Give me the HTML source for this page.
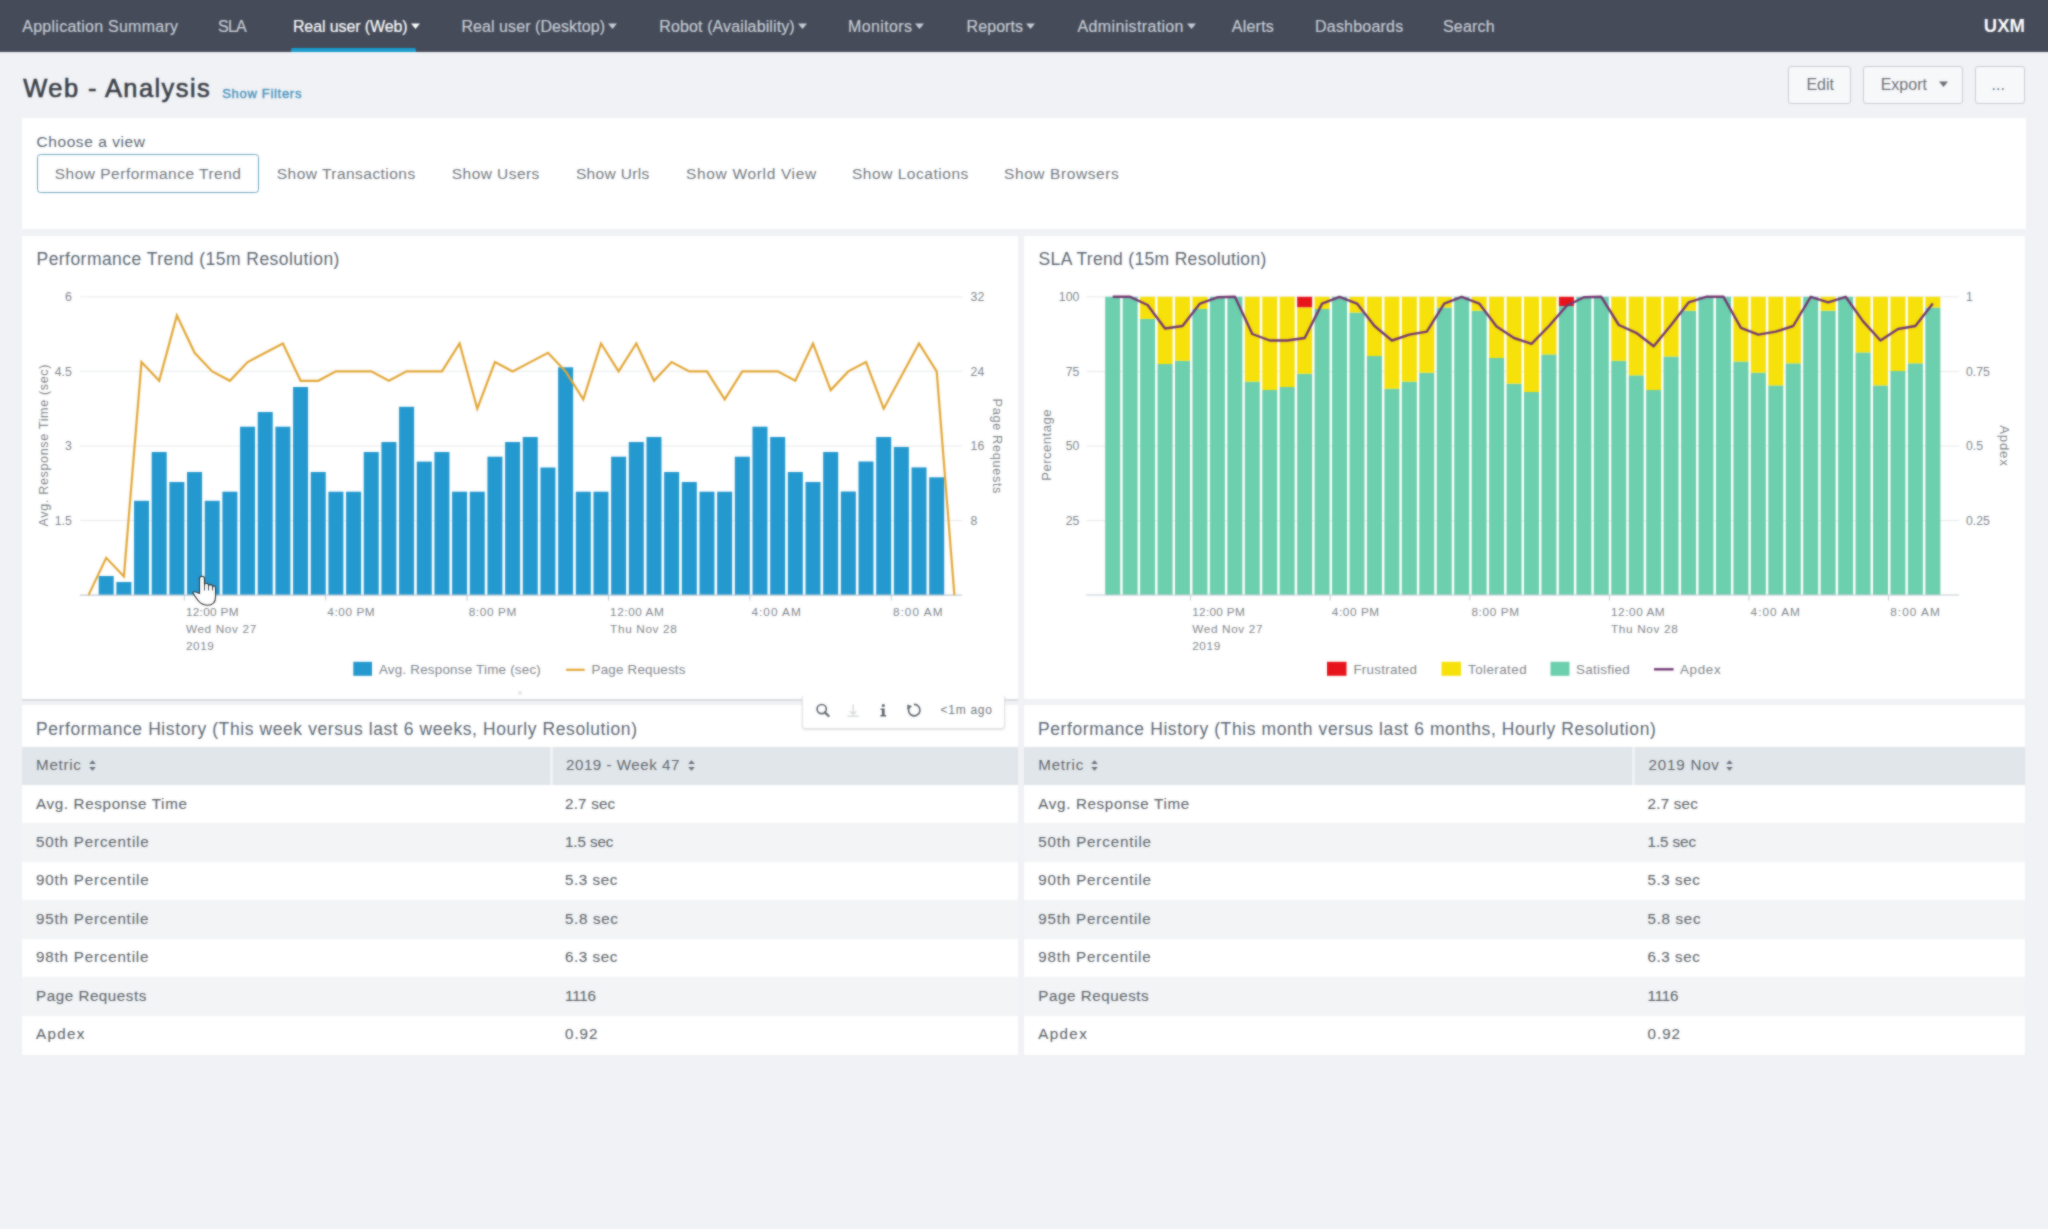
<!DOCTYPE html>
<html><head><meta charset="utf-8"><title>Web - Analysis</title>
<style>
html,body{margin:0;padding:0;width:2048px;height:1229px;overflow:hidden;background:#f1f2f5;font-family:"Liberation Sans", sans-serif;}
.t{position:absolute;white-space:nowrap;line-height:1;font-family:"Liberation Sans", sans-serif;}
.wrap{position:absolute;left:-12px;top:-12px;width:2072px;height:1253px;background:#f1f2f5;overflow:hidden;}
.bl{filter:blur(0.9px);opacity:0.6;}
.inner{position:absolute;left:12px;top:12px;width:2048px;height:1229px;}
</style></head><body>
<div class="wrap"><div style="position:absolute;left:0;top:0;width:2072px;height:64px;background:#454b59"></div><div class="inner">
<div style="position:absolute;left:0;top:0;width:2048px;height:52px;background:#454b59"></div>
<div class="t" style="left:22.3px;top:18.8px;font-size:16px;color:#c8ced6;font-weight:400;letter-spacing:0.2514999999999993px;-webkit-text-stroke:0.2px #c8ced6;">Application Summary</div>
<div class="t" style="left:218.0px;top:18.8px;font-size:16px;color:#c8ced6;font-weight:400;letter-spacing:-0.7712500000000002px;-webkit-text-stroke:0.2px #c8ced6;">SLA</div>
<div class="t" style="left:292.9px;top:18.8px;font-size:16px;color:#ffffff;font-weight:400;letter-spacing:-0.09916071428571424px;-webkit-text-stroke:0.2px #ffffff;">Real user (Web)</div>
<svg style="position:absolute;left:410.7px;top:22.5px" width="10" height="7"><path d="M0 0.5 L9 0.5 L4.5 6 Z" fill="#ffffff"/></svg>
<div class="t" style="left:461.4px;top:18.8px;font-size:16px;color:#c8ced6;font-weight:400;letter-spacing:0.07365277777777773px;-webkit-text-stroke:0.2px #c8ced6;">Real user (Desktop)</div>
<svg style="position:absolute;left:608.0px;top:22.5px" width="10" height="7"><path d="M0 0.5 L9 0.5 L4.5 6 Z" fill="#c8ced6"/></svg>
<div class="t" style="left:659.3px;top:18.8px;font-size:16px;color:#c8ced6;font-weight:400;letter-spacing:0.1213289473684211px;-webkit-text-stroke:0.2px #c8ced6;">Robot (Availability)</div>
<svg style="position:absolute;left:797.7px;top:22.5px" width="10" height="7"><path d="M0 0.5 L9 0.5 L4.5 6 Z" fill="#c8ced6"/></svg>
<div class="t" style="left:848.0px;top:18.8px;font-size:16px;color:#c8ced6;font-weight:400;letter-spacing:0.3782857142857147px;-webkit-text-stroke:0.2px #c8ced6;">Monitors</div>
<svg style="position:absolute;left:915.0px;top:22.5px" width="10" height="7"><path d="M0 0.5 L9 0.5 L4.5 6 Z" fill="#c8ced6"/></svg>
<div class="t" style="left:966.6px;top:18.8px;font-size:16px;color:#c8ced6;font-weight:400;letter-spacing:0.06270833333333314px;-webkit-text-stroke:0.2px #c8ced6;">Reports</div>
<svg style="position:absolute;left:1026.0px;top:22.5px" width="10" height="7"><path d="M0 0.5 L9 0.5 L4.5 6 Z" fill="#c8ced6"/></svg>
<div class="t" style="left:1077.5px;top:18.8px;font-size:16px;color:#c8ced6;font-weight:400;letter-spacing:0.35571153846153875px;-webkit-text-stroke:0.2px #c8ced6;">Administration</div>
<svg style="position:absolute;left:1186.5px;top:22.5px" width="10" height="7"><path d="M0 0.5 L9 0.5 L4.5 6 Z" fill="#c8ced6"/></svg>
<div class="t" style="left:1231.8px;top:18.8px;font-size:16px;color:#c8ced6;font-weight:400;letter-spacing:0.22025000000000006px;-webkit-text-stroke:0.2px #c8ced6;">Alerts</div>
<div class="t" style="left:1315.0px;top:18.8px;font-size:16px;color:#c8ced6;font-weight:400;letter-spacing:0.21400000000000022px;-webkit-text-stroke:0.2px #c8ced6;">Dashboards</div>
<div class="t" style="left:1443.0px;top:18.8px;font-size:16px;color:#c8ced6;font-weight:400;letter-spacing:0.18085000000000093px;-webkit-text-stroke:0.2px #c8ced6;">Search</div>
<div style="position:absolute;left:290.6px;top:48px;width:125.4px;height:4px;background:#1a9ccd;border-radius:2px 2px 0 0"></div>
<div class="t" style="left:1983.8px;top:17.3px;font-size:18.5px;color:#ffffff;font-weight:700;letter-spacing:0px;">UXM</div>
<div class="t" style="left:23.3px;top:75.9px;font-size:25.5px;color:#3a4049;font-weight:400;letter-spacing:1.4016250000000001px;-webkit-text-stroke:0.6px #3a4049;">Web - Analysis</div>
<div class="t" style="left:222.2px;top:86.5px;font-size:13px;color:#4f98c0;font-weight:400;letter-spacing:0.6982272727272736px;-webkit-text-stroke:0.45px #4f98c0;">Show Filters</div>
<div style="position:absolute;left:1787.8px;top:65.5px;width:63px;height:38px;box-sizing:border-box;border:1px solid #c9cfd6;border-radius:3px;background:#f7f8fa"></div><div class="t" style="left:1806.4px;top:76.5px;font-size:16px;color:#6a7077;font-weight:400;letter-spacing:0px;">Edit</div>
<div style="position:absolute;left:1863.4px;top:65.5px;width:100px;height:38px;box-sizing:border-box;border:1px solid #c9cfd6;border-radius:3px;background:#f7f8fa"></div><div class="t" style="left:1880.7px;top:76.5px;font-size:16px;color:#6a7077;font-weight:400;letter-spacing:0px;">Export</div><svg style="position:absolute;left:1939.4px;top:81px" width="10" height="7"><path d="M0 0.5 L9 0.5 L4.5 6 Z" fill="#6a7077"/></svg>
<div style="position:absolute;left:1975px;top:65.5px;width:49.5px;height:38px;box-sizing:border-box;border:1px solid #c9cfd6;border-radius:3px;background:#f7f8fa"></div><div class="t" style="left:1991.5px;top:76.5px;font-size:16px;color:#6a7077;font-weight:400;letter-spacing:0px;">...</div>
<div style="position:absolute;left:22px;top:118px;width:2003.5px;height:111px;background:#fff"></div>
<div style="position:absolute;left:22px;top:235.5px;width:996px;height:463px;background:#fff"></div>
<div style="position:absolute;left:1024.3px;top:235.5px;width:1001.2px;height:463px;background:#fff"></div>
<div style="position:absolute;left:22px;top:705.4px;width:996px;height:350px;background:#fff"></div>
<div style="position:absolute;left:1024.3px;top:705.4px;width:1001.2px;height:350px;background:#fff"></div>
<div class="t" style="left:36.5px;top:134.4px;font-size:15.5px;color:#5c6773;font-weight:400;letter-spacing:0.5694837239583338px;">Choose a view</div>
<div style="position:absolute;left:36.5px;top:154.4px;width:222.3px;height:38.5px;box-sizing:border-box;border:1.5px solid #72a9c4;border-radius:3.5px;background:#fff"></div>
<div class="t" style="left:54.7px;top:165.7px;font-size:15.5px;color:#71777e;font-weight:400;letter-spacing:0.5022012648809528px;">Show Performance Trend</div>
<div class="t" style="left:276.8px;top:165.7px;font-size:15.5px;color:#71777e;font-weight:400;letter-spacing:0.46524316406249966px;">Show Transactions</div>
<div class="t" style="left:451.8px;top:165.7px;font-size:15.5px;color:#71777e;font-weight:400;letter-spacing:0.4383142361111112px;">Show Users</div>
<div class="t" style="left:575.9px;top:165.7px;font-size:15.5px;color:#71777e;font-weight:400;letter-spacing:0.3464482421875008px;">Show Urls</div>
<div class="t" style="left:686.0px;top:165.7px;font-size:15.5px;color:#71777e;font-weight:400;letter-spacing:0.664441406249999px;">Show World View</div>
<div class="t" style="left:852.0px;top:165.7px;font-size:15.5px;color:#71777e;font-weight:400;letter-spacing:0.5283497596153841px;">Show Locations</div>
<div class="t" style="left:1004.0px;top:165.7px;font-size:15.5px;color:#71777e;font-weight:400;letter-spacing:0.5853470052083338px;">Show Browsers</div>
<div class="t" style="left:36.5px;top:250.5px;font-size:17.5px;color:#5c6773;font-weight:400;letter-spacing:0.4543584280303028px;">Performance Trend (15m Resolution)</div>
<div class="t" style="left:1038.6px;top:250.5px;font-size:17.5px;color:#5c6773;font-weight:400;letter-spacing:0.31452343749999956px;">SLA Trend (15m Resolution)</div>
<div class="t" style="left:36.0px;top:720.5px;font-size:17.5px;color:#5c6773;font-weight:400;letter-spacing:0.5914407835144923px;">Performance History (This week versus last 6 weeks, Hourly Resolution)</div>
<div class="t" style="left:1038.0px;top:720.5px;font-size:17.5px;color:#5c6773;font-weight:400;letter-spacing:0.5921187279929565px;">Performance History (This month versus last 6 months, Hourly Resolution)</div>
<div style="position:absolute;left:22px;top:747px;width:996px;height:38px;background:#e1e6eb"></div><div style="position:absolute;left:550.3px;top:747px;width:2.5px;height:38px;background:#f1f3f6"></div><div class="t" style="left:36.0px;top:757.4px;font-size:15.2px;color:#60666c;font-weight:400;letter-spacing:0.7245500000000007px;">Metric</div><svg style="position:absolute;left:88px;top:759px" width="9" height="13"><path d="M1.2 5 L4.5 1.2 L7.8 5 Z M1.2 8 L4.5 11.8 L7.8 8 Z" fill="#6b7580"/></svg><div class="t" style="left:566.0px;top:757.4px;font-size:15.2px;color:#60666c;font-weight:400;letter-spacing:0.49759423076923126px;">2019 - Week 47</div><svg style="position:absolute;left:686.5px;top:759px" width="9" height="13"><path d="M1.2 5 L4.5 1.2 L7.8 5 Z M1.2 8 L4.5 11.8 L7.8 8 Z" fill="#6b7580"/></svg><div style="position:absolute;left:22px;top:785.0px;width:996px;height:38.5px;background:#ffffff"></div><div class="t" style="left:36.0px;top:795.5px;font-size:15.2px;color:#60666c;font-weight:400;letter-spacing:0.6488286764705887px;-webkit-text-stroke:0.1px #60666c;">Avg. Response Time</div><div class="t" style="left:565.0px;top:795.5px;font-size:15.2px;color:#60666c;font-weight:400;letter-spacing:0.19888333333333463px;-webkit-text-stroke:0.1px #60666c;">2.7 sec</div><div style="position:absolute;left:22px;top:823.4px;width:996px;height:38.5px;background:#f2f4f6"></div><div class="t" style="left:36.0px;top:834.0px;font-size:15.2px;color:#60666c;font-weight:400;letter-spacing:0.8144107142857138px;-webkit-text-stroke:0.1px #60666c;">50th Percentile</div><div class="t" style="left:565.0px;top:834.0px;font-size:15.2px;color:#60666c;font-weight:400;letter-spacing:-0.08444999999999918px;-webkit-text-stroke:0.1px #60666c;">1.5 sec</div><div style="position:absolute;left:22px;top:861.9px;width:996px;height:38.5px;background:#ffffff"></div><div class="t" style="left:36.0px;top:872.4px;font-size:15.2px;color:#60666c;font-weight:400;letter-spacing:0.8144107142857138px;-webkit-text-stroke:0.1px #60666c;">90th Percentile</div><div class="t" style="left:565.0px;top:872.4px;font-size:15.2px;color:#60666c;font-weight:400;letter-spacing:0.5488833333333337px;-webkit-text-stroke:0.1px #60666c;">5.3 sec</div><div style="position:absolute;left:22px;top:900.3px;width:996px;height:38.5px;background:#f2f4f6"></div><div class="t" style="left:36.0px;top:910.8px;font-size:15.2px;color:#60666c;font-weight:400;letter-spacing:0.7929821428571425px;-webkit-text-stroke:0.1px #60666c;">95th Percentile</div><div class="t" style="left:565.0px;top:910.8px;font-size:15.2px;color:#60666c;font-weight:400;letter-spacing:0.6655500000000009px;-webkit-text-stroke:0.1px #60666c;">5.8 sec</div><div style="position:absolute;left:22px;top:938.7px;width:996px;height:38.5px;background:#ffffff"></div><div class="t" style="left:36.0px;top:949.3px;font-size:15.2px;color:#60666c;font-weight:400;letter-spacing:0.7929821428571425px;-webkit-text-stroke:0.1px #60666c;">98th Percentile</div><div class="t" style="left:565.0px;top:949.3px;font-size:15.2px;color:#60666c;font-weight:400;letter-spacing:0.5488833333333337px;-webkit-text-stroke:0.1px #60666c;">6.3 sec</div><div style="position:absolute;left:22px;top:977.1px;width:996px;height:38.5px;background:#f2f4f6"></div><div class="t" style="left:36.0px;top:987.7px;font-size:15.2px;color:#60666c;font-weight:400;letter-spacing:0.538632291666668px;-webkit-text-stroke:0.1px #60666c;">Page Requests</div><div class="t" style="left:565.0px;top:987.7px;font-size:15.2px;color:#60666c;font-weight:400;letter-spacing:-0.18601666666666597px;-webkit-text-stroke:0.1px #60666c;">1116</div><div style="position:absolute;left:22px;top:1015.6px;width:996px;height:38.5px;background:#ffffff"></div><div class="t" style="left:36.0px;top:1026.1px;font-size:15.2px;color:#60666c;font-weight:400;letter-spacing:1.3502187499999998px;-webkit-text-stroke:0.1px #60666c;">Apdex</div><div class="t" style="left:565.0px;top:1026.1px;font-size:15.2px;color:#60666c;font-weight:400;letter-spacing:0.9720958333333343px;-webkit-text-stroke:0.1px #60666c;">0.92</div>
<div style="position:absolute;left:1024.3px;top:747px;width:1001.2px;height:38px;background:#e1e6eb"></div><div style="position:absolute;left:1632.4px;top:747px;width:2.5px;height:38px;background:#f1f3f6"></div><div class="t" style="left:1038.3px;top:757.4px;font-size:15.2px;color:#60666c;font-weight:400;letter-spacing:0.7245500000000007px;">Metric</div><svg style="position:absolute;left:1090.3px;top:759px" width="9" height="13"><path d="M1.2 5 L4.5 1.2 L7.8 5 Z M1.2 8 L4.5 11.8 L7.8 8 Z" fill="#6b7580"/></svg><div class="t" style="left:1648.6px;top:757.4px;font-size:15.2px;color:#60666c;font-weight:400;letter-spacing:0.7617321428571435px;">2019 Nov</div><svg style="position:absolute;left:1725px;top:759px" width="9" height="13"><path d="M1.2 5 L4.5 1.2 L7.8 5 Z M1.2 8 L4.5 11.8 L7.8 8 Z" fill="#6b7580"/></svg><div style="position:absolute;left:1024.3px;top:785.0px;width:1001.2px;height:38.5px;background:#ffffff"></div><div class="t" style="left:1038.3px;top:795.5px;font-size:15.2px;color:#60666c;font-weight:400;letter-spacing:0.6488286764705887px;-webkit-text-stroke:0.1px #60666c;">Avg. Response Time</div><div class="t" style="left:1647.6px;top:795.5px;font-size:15.2px;color:#60666c;font-weight:400;letter-spacing:0.19888333333333463px;-webkit-text-stroke:0.1px #60666c;">2.7 sec</div><div style="position:absolute;left:1024.3px;top:823.4px;width:1001.2px;height:38.5px;background:#f2f4f6"></div><div class="t" style="left:1038.3px;top:834.0px;font-size:15.2px;color:#60666c;font-weight:400;letter-spacing:0.8144107142857138px;-webkit-text-stroke:0.1px #60666c;">50th Percentile</div><div class="t" style="left:1647.6px;top:834.0px;font-size:15.2px;color:#60666c;font-weight:400;letter-spacing:-0.08444999999999918px;-webkit-text-stroke:0.1px #60666c;">1.5 sec</div><div style="position:absolute;left:1024.3px;top:861.9px;width:1001.2px;height:38.5px;background:#ffffff"></div><div class="t" style="left:1038.3px;top:872.4px;font-size:15.2px;color:#60666c;font-weight:400;letter-spacing:0.8144107142857138px;-webkit-text-stroke:0.1px #60666c;">90th Percentile</div><div class="t" style="left:1647.6px;top:872.4px;font-size:15.2px;color:#60666c;font-weight:400;letter-spacing:0.5488833333333337px;-webkit-text-stroke:0.1px #60666c;">5.3 sec</div><div style="position:absolute;left:1024.3px;top:900.3px;width:1001.2px;height:38.5px;background:#f2f4f6"></div><div class="t" style="left:1038.3px;top:910.8px;font-size:15.2px;color:#60666c;font-weight:400;letter-spacing:0.7929821428571425px;-webkit-text-stroke:0.1px #60666c;">95th Percentile</div><div class="t" style="left:1647.6px;top:910.8px;font-size:15.2px;color:#60666c;font-weight:400;letter-spacing:0.6655500000000009px;-webkit-text-stroke:0.1px #60666c;">5.8 sec</div><div style="position:absolute;left:1024.3px;top:938.7px;width:1001.2px;height:38.5px;background:#ffffff"></div><div class="t" style="left:1038.3px;top:949.3px;font-size:15.2px;color:#60666c;font-weight:400;letter-spacing:0.7929821428571425px;-webkit-text-stroke:0.1px #60666c;">98th Percentile</div><div class="t" style="left:1647.6px;top:949.3px;font-size:15.2px;color:#60666c;font-weight:400;letter-spacing:0.5488833333333337px;-webkit-text-stroke:0.1px #60666c;">6.3 sec</div><div style="position:absolute;left:1024.3px;top:977.1px;width:1001.2px;height:38.5px;background:#f2f4f6"></div><div class="t" style="left:1038.3px;top:987.7px;font-size:15.2px;color:#60666c;font-weight:400;letter-spacing:0.538632291666668px;-webkit-text-stroke:0.1px #60666c;">Page Requests</div><div class="t" style="left:1647.6px;top:987.7px;font-size:15.2px;color:#60666c;font-weight:400;letter-spacing:-0.18601666666666597px;-webkit-text-stroke:0.1px #60666c;">1116</div><div style="position:absolute;left:1024.3px;top:1015.6px;width:1001.2px;height:38.5px;background:#ffffff"></div><div class="t" style="left:1038.3px;top:1026.1px;font-size:15.2px;color:#60666c;font-weight:400;letter-spacing:1.3502187499999998px;-webkit-text-stroke:0.1px #60666c;">Apdex</div><div class="t" style="left:1647.6px;top:1026.1px;font-size:15.2px;color:#60666c;font-weight:400;letter-spacing:0.9720958333333343px;-webkit-text-stroke:0.1px #60666c;">0.92</div>
<svg style="position:absolute;left:0;top:0" width="2048" height="1229" font-family='"Liberation Sans", sans-serif'>
<line x1="80.3" y1="296.9" x2="962" y2="296.9" stroke="#e9ebee" stroke-width="1"/>
<line x1="80.3" y1="371.3" x2="962" y2="371.3" stroke="#e9ebee" stroke-width="1"/>
<line x1="80.3" y1="446.0" x2="962" y2="446.0" stroke="#e9ebee" stroke-width="1"/>
<line x1="80.3" y1="520.5" x2="962" y2="520.5" stroke="#e9ebee" stroke-width="1"/>
<rect x="98.70" y="576" width="15" height="19.1" fill="#2499cf"/>
<rect x="116.37" y="582" width="15" height="13.1" fill="#2499cf"/>
<rect x="134.04" y="500.8" width="15" height="94.3" fill="#2499cf"/>
<rect x="151.71" y="452" width="15" height="143.1" fill="#2499cf"/>
<rect x="169.38" y="482" width="15" height="113.1" fill="#2499cf"/>
<rect x="187.05" y="472" width="15" height="123.1" fill="#2499cf"/>
<rect x="204.72" y="500.8" width="15" height="94.3" fill="#2499cf"/>
<rect x="222.39" y="491.7" width="15" height="103.4" fill="#2499cf"/>
<rect x="240.06" y="426.7" width="15" height="168.4" fill="#2499cf"/>
<rect x="257.73" y="412" width="15" height="183.1" fill="#2499cf"/>
<rect x="275.40" y="426.7" width="15" height="168.4" fill="#2499cf"/>
<rect x="293.07" y="387" width="15" height="208.1" fill="#2499cf"/>
<rect x="310.74" y="472" width="15" height="123.1" fill="#2499cf"/>
<rect x="328.41" y="491.7" width="15" height="103.4" fill="#2499cf"/>
<rect x="346.08" y="491.7" width="15" height="103.4" fill="#2499cf"/>
<rect x="363.75" y="452" width="15" height="143.1" fill="#2499cf"/>
<rect x="381.42" y="442" width="15" height="153.1" fill="#2499cf"/>
<rect x="399.09" y="406.8" width="15" height="188.3" fill="#2499cf"/>
<rect x="416.76" y="461.6" width="15" height="133.5" fill="#2499cf"/>
<rect x="434.43" y="452" width="15" height="143.1" fill="#2499cf"/>
<rect x="452.10" y="491.7" width="15" height="103.4" fill="#2499cf"/>
<rect x="469.77" y="491.7" width="15" height="103.4" fill="#2499cf"/>
<rect x="487.44" y="456.7" width="15" height="138.4" fill="#2499cf"/>
<rect x="505.11" y="442" width="15" height="153.1" fill="#2499cf"/>
<rect x="522.78" y="437" width="15" height="158.1" fill="#2499cf"/>
<rect x="540.45" y="467.5" width="15" height="127.6" fill="#2499cf"/>
<rect x="558.12" y="367.3" width="15" height="227.8" fill="#2499cf"/>
<rect x="575.79" y="491.7" width="15" height="103.4" fill="#2499cf"/>
<rect x="593.46" y="491.7" width="15" height="103.4" fill="#2499cf"/>
<rect x="611.13" y="456.7" width="15" height="138.4" fill="#2499cf"/>
<rect x="628.80" y="442" width="15" height="153.1" fill="#2499cf"/>
<rect x="646.47" y="437" width="15" height="158.1" fill="#2499cf"/>
<rect x="664.14" y="472" width="15" height="123.1" fill="#2499cf"/>
<rect x="681.81" y="482" width="15" height="113.1" fill="#2499cf"/>
<rect x="699.48" y="491.7" width="15" height="103.4" fill="#2499cf"/>
<rect x="717.15" y="491.7" width="15" height="103.4" fill="#2499cf"/>
<rect x="734.82" y="456.7" width="15" height="138.4" fill="#2499cf"/>
<rect x="752.49" y="426.7" width="15" height="168.4" fill="#2499cf"/>
<rect x="770.16" y="437" width="15" height="158.1" fill="#2499cf"/>
<rect x="787.83" y="472" width="15" height="123.1" fill="#2499cf"/>
<rect x="805.50" y="482" width="15" height="113.1" fill="#2499cf"/>
<rect x="823.17" y="452" width="15" height="143.1" fill="#2499cf"/>
<rect x="840.84" y="491.5" width="15" height="103.6" fill="#2499cf"/>
<rect x="858.51" y="461.5" width="15" height="133.6" fill="#2499cf"/>
<rect x="876.18" y="437" width="15" height="158.1" fill="#2499cf"/>
<rect x="893.85" y="447" width="15" height="148.1" fill="#2499cf"/>
<rect x="911.52" y="467.4" width="15" height="127.7" fill="#2499cf"/>
<rect x="929.19" y="477.3" width="15" height="117.8" fill="#2499cf"/>
<line x1="79.8" y1="595.1" x2="962" y2="595.1" stroke="#c3cbd4" stroke-width="1.2"/>
<polyline points="88.5,595.1 106.2,557.8 123.9,576.5 141.5,362.1 159.2,380.8 176.9,315.5 194.6,352.8 212.2,371.4 229.9,380.8 247.6,362.1 265.2,352.8 282.9,343.5 300.6,380.8 318.2,380.8 335.9,371.4 353.6,371.4 371.2,371.4 388.9,380.8 406.6,371.4 424.3,371.4 441.9,371.4 459.6,343.5 477.3,408.7 494.9,362.1 512.6,371.4 530.3,362.1 548.0,352.8 565.6,371.4 583.3,399.4 601.0,343.5 618.6,371.4 636.3,343.5 654.0,380.8 671.6,362.1 689.3,371.4 707.0,371.4 724.7,399.4 742.3,371.4 760.0,371.4 777.7,371.4 795.3,380.8 813.0,343.5 830.7,390.1 848.3,371.4 866.0,362.1 883.7,408.7 901.4,376.1 919.0,343.5 936.7,371.4 954.4,595.1" fill="none" stroke="#e2a737" stroke-width="2.2" stroke-linejoin="miter"/>
<line x1="184.3" y1="595.1" x2="184.3" y2="600.6" stroke="#c3cbd4" stroke-width="1"/>
<text x="185.9" y="616.3" font-size="11.8" fill="#80868c" textLength="52.6" lengthAdjust="spacing">12:00 PM</text>
<text x="185.9" y="633.1" font-size="11.8" fill="#80868c" textLength="70.3" lengthAdjust="spacing">Wed Nov 27</text>
<text x="185.9" y="649.9" font-size="11.8" fill="#80868c" textLength="28" lengthAdjust="spacing">2019</text>
<line x1="325.7" y1="595.1" x2="325.7" y2="600.6" stroke="#c3cbd4" stroke-width="1"/>
<text x="327.3" y="616.3" font-size="11.8" fill="#80868c" textLength="47.4" lengthAdjust="spacing">4:00 PM</text>
<line x1="467.1" y1="595.1" x2="467.1" y2="600.6" stroke="#c3cbd4" stroke-width="1"/>
<text x="468.7" y="616.3" font-size="11.8" fill="#80868c" textLength="47.6" lengthAdjust="spacing">8:00 PM</text>
<line x1="608.5" y1="595.1" x2="608.5" y2="600.6" stroke="#c3cbd4" stroke-width="1"/>
<text x="610.1" y="616.3" font-size="11.8" fill="#80868c" textLength="53.7" lengthAdjust="spacing">12:00 AM</text>
<text x="610.1" y="633.1" font-size="11.8" fill="#80868c" textLength="66.7" lengthAdjust="spacing">Thu Nov 28</text>
<line x1="749.9" y1="595.1" x2="749.9" y2="600.6" stroke="#c3cbd4" stroke-width="1"/>
<text x="751.5" y="616.3" font-size="11.8" fill="#80868c" textLength="49.3" lengthAdjust="spacing">4:00 AM</text>
<line x1="891.3" y1="595.1" x2="891.3" y2="600.6" stroke="#c3cbd4" stroke-width="1"/>
<text x="892.9" y="616.3" font-size="11.8" fill="#80868c" textLength="49.6" lengthAdjust="spacing">8:00 AM</text>
<text x="71.8" y="301.2" font-size="12.3" fill="#80868c" text-anchor="end">6</text>
<text x="71.8" y="375.6" font-size="12.3" fill="#80868c" text-anchor="end">4.5</text>
<text x="71.8" y="450.3" font-size="12.3" fill="#80868c" text-anchor="end">3</text>
<text x="71.8" y="524.8" font-size="12.3" fill="#80868c" text-anchor="end">1.5</text>
<text x="970.6" y="301.2" font-size="12.3" fill="#80868c">32</text>
<text x="970.6" y="375.6" font-size="12.3" fill="#80868c">24</text>
<text x="970.6" y="450.3" font-size="12.3" fill="#80868c">16</text>
<text x="970.6" y="524.8" font-size="12.3" fill="#80868c">8</text>
<text transform="translate(47.6,445.5) rotate(-90)" font-size="12.6" fill="#80868c" text-anchor="middle" textLength="161.9" lengthAdjust="spacing">Avg. Response Time (sec)</text>
<text transform="translate(992.6,446) rotate(90)" font-size="12.8" fill="#80868c" text-anchor="middle" textLength="95" lengthAdjust="spacing">Page Requests</text>
<rect x="353.3" y="661.8" width="18.7" height="14" fill="#2499cf"/>
<text x="378.9" y="674.4" font-size="13.4" fill="#80868c" textLength="161.9" lengthAdjust="spacing">Avg. Response Time (sec)</text>
<line x1="566" y1="669.8" x2="584.7" y2="669.8" stroke="#e2a737" stroke-width="2.2"/>
<text x="591.5" y="674.4" font-size="13.4" fill="#80868c" textLength="94" lengthAdjust="spacing">Page Requests</text>
<line x1="1086.4" y1="296.8" x2="1959" y2="296.8" stroke="#e9ebee" stroke-width="1"/>
<line x1="1086.4" y1="371.5" x2="1959" y2="371.5" stroke="#e9ebee" stroke-width="1"/>
<line x1="1086.4" y1="446.0" x2="1959" y2="446.0" stroke="#e9ebee" stroke-width="1"/>
<line x1="1086.4" y1="520.5" x2="1959" y2="520.5" stroke="#e9ebee" stroke-width="1"/>
<rect x="1105.20" y="296.8" width="15" height="298.2" fill="#6ccfae"/>
<rect x="1122.65" y="296.8" width="15" height="298.2" fill="#6ccfae"/>
<rect x="1140.10" y="318.9" width="15" height="276.1" fill="#6ccfae"/>
<rect x="1140.10" y="296.8" width="15" height="22.1" fill="#f7e10b"/>
<rect x="1157.55" y="364" width="15" height="231.0" fill="#6ccfae"/>
<rect x="1157.55" y="296.8" width="15" height="67.2" fill="#f7e10b"/>
<rect x="1175.00" y="360.8" width="15" height="234.2" fill="#6ccfae"/>
<rect x="1175.00" y="296.8" width="15" height="64.0" fill="#f7e10b"/>
<rect x="1192.45" y="309" width="15" height="286.0" fill="#6ccfae"/>
<rect x="1192.45" y="296.8" width="15" height="12.2" fill="#f7e10b"/>
<rect x="1209.90" y="296.8" width="15" height="298.2" fill="#6ccfae"/>
<rect x="1227.35" y="296.8" width="15" height="298.2" fill="#6ccfae"/>
<rect x="1244.80" y="381.6" width="15" height="213.4" fill="#6ccfae"/>
<rect x="1244.80" y="296.8" width="15" height="84.8" fill="#f7e10b"/>
<rect x="1262.25" y="390" width="15" height="205.0" fill="#6ccfae"/>
<rect x="1262.25" y="296.8" width="15" height="93.2" fill="#f7e10b"/>
<rect x="1279.70" y="387" width="15" height="208.0" fill="#6ccfae"/>
<rect x="1279.70" y="296.8" width="15" height="90.2" fill="#f7e10b"/>
<rect x="1297.15" y="373.7" width="15" height="221.3" fill="#6ccfae"/>
<rect x="1297.15" y="296.8" width="15" height="10.7" fill="#e8141c"/>
<rect x="1297.15" y="307.5" width="15" height="66.2" fill="#f7e10b"/>
<rect x="1314.60" y="309" width="15" height="286.0" fill="#6ccfae"/>
<rect x="1314.60" y="296.8" width="15" height="12.2" fill="#f7e10b"/>
<rect x="1332.05" y="296.8" width="15" height="298.2" fill="#6ccfae"/>
<rect x="1349.50" y="312.5" width="15" height="282.5" fill="#6ccfae"/>
<rect x="1349.50" y="296.8" width="15" height="15.7" fill="#f7e10b"/>
<rect x="1366.95" y="356" width="15" height="239.0" fill="#6ccfae"/>
<rect x="1366.95" y="296.8" width="15" height="59.2" fill="#f7e10b"/>
<rect x="1384.40" y="388.7" width="15" height="206.3" fill="#6ccfae"/>
<rect x="1384.40" y="296.8" width="15" height="91.9" fill="#f7e10b"/>
<rect x="1401.85" y="381.6" width="15" height="213.4" fill="#6ccfae"/>
<rect x="1401.85" y="296.8" width="15" height="84.8" fill="#f7e10b"/>
<rect x="1419.30" y="372.7" width="15" height="222.3" fill="#6ccfae"/>
<rect x="1419.30" y="296.8" width="15" height="75.9" fill="#f7e10b"/>
<rect x="1436.75" y="307.5" width="15" height="287.5" fill="#6ccfae"/>
<rect x="1436.75" y="296.8" width="15" height="10.7" fill="#f7e10b"/>
<rect x="1454.20" y="296.8" width="15" height="298.2" fill="#6ccfae"/>
<rect x="1471.65" y="310.75" width="15" height="284.2" fill="#6ccfae"/>
<rect x="1471.65" y="296.8" width="15" height="13.9" fill="#f7e10b"/>
<rect x="1489.10" y="358" width="15" height="237.0" fill="#6ccfae"/>
<rect x="1489.10" y="296.8" width="15" height="61.2" fill="#f7e10b"/>
<rect x="1506.55" y="383.6" width="15" height="211.4" fill="#6ccfae"/>
<rect x="1506.55" y="296.8" width="15" height="86.8" fill="#f7e10b"/>
<rect x="1524.00" y="392" width="15" height="203.0" fill="#6ccfae"/>
<rect x="1524.00" y="296.8" width="15" height="95.2" fill="#f7e10b"/>
<rect x="1541.45" y="354.4" width="15" height="240.6" fill="#6ccfae"/>
<rect x="1541.45" y="296.8" width="15" height="57.6" fill="#f7e10b"/>
<rect x="1558.90" y="306" width="15" height="289.0" fill="#6ccfae"/>
<rect x="1558.90" y="296.8" width="15" height="9.2" fill="#e8141c"/>
<rect x="1576.35" y="296.8" width="15" height="298.2" fill="#6ccfae"/>
<rect x="1593.80" y="296.8" width="15" height="298.2" fill="#6ccfae"/>
<rect x="1611.25" y="360.8" width="15" height="234.2" fill="#6ccfae"/>
<rect x="1611.25" y="296.8" width="15" height="64.0" fill="#f7e10b"/>
<rect x="1628.70" y="375.3" width="15" height="219.7" fill="#6ccfae"/>
<rect x="1628.70" y="296.8" width="15" height="78.5" fill="#f7e10b"/>
<rect x="1646.15" y="390" width="15" height="205.0" fill="#6ccfae"/>
<rect x="1646.15" y="296.8" width="15" height="93.2" fill="#f7e10b"/>
<rect x="1663.60" y="356.5" width="15" height="238.5" fill="#6ccfae"/>
<rect x="1663.60" y="296.8" width="15" height="59.7" fill="#f7e10b"/>
<rect x="1681.05" y="310.75" width="15" height="284.2" fill="#6ccfae"/>
<rect x="1681.05" y="296.8" width="15" height="13.9" fill="#f7e10b"/>
<rect x="1698.50" y="296.8" width="15" height="298.2" fill="#6ccfae"/>
<rect x="1715.95" y="296.8" width="15" height="298.2" fill="#6ccfae"/>
<rect x="1733.40" y="361.5" width="15" height="233.5" fill="#6ccfae"/>
<rect x="1733.40" y="296.8" width="15" height="64.7" fill="#f7e10b"/>
<rect x="1750.85" y="372.7" width="15" height="222.3" fill="#6ccfae"/>
<rect x="1750.85" y="296.8" width="15" height="75.9" fill="#f7e10b"/>
<rect x="1768.30" y="385.4" width="15" height="209.6" fill="#6ccfae"/>
<rect x="1768.30" y="296.8" width="15" height="88.6" fill="#f7e10b"/>
<rect x="1785.75" y="363.3" width="15" height="231.7" fill="#6ccfae"/>
<rect x="1785.75" y="296.8" width="15" height="66.5" fill="#f7e10b"/>
<rect x="1803.20" y="296.8" width="15" height="298.2" fill="#6ccfae"/>
<rect x="1820.65" y="310.75" width="15" height="284.2" fill="#6ccfae"/>
<rect x="1820.65" y="296.8" width="15" height="13.9" fill="#f7e10b"/>
<rect x="1838.10" y="296.8" width="15" height="298.2" fill="#6ccfae"/>
<rect x="1855.55" y="352.4" width="15" height="242.6" fill="#6ccfae"/>
<rect x="1855.55" y="296.8" width="15" height="55.6" fill="#f7e10b"/>
<rect x="1873.00" y="385.4" width="15" height="209.6" fill="#6ccfae"/>
<rect x="1873.00" y="296.8" width="15" height="88.6" fill="#f7e10b"/>
<rect x="1890.45" y="371" width="15" height="224.0" fill="#6ccfae"/>
<rect x="1890.45" y="296.8" width="15" height="74.2" fill="#f7e10b"/>
<rect x="1907.90" y="363.3" width="15" height="231.7" fill="#6ccfae"/>
<rect x="1907.90" y="296.8" width="15" height="66.5" fill="#f7e10b"/>
<rect x="1925.35" y="307.5" width="15" height="287.5" fill="#6ccfae"/>
<rect x="1925.35" y="296.8" width="15" height="10.7" fill="#f7e10b"/>
<line x1="1086.4" y1="595.0" x2="1959" y2="595.0" stroke="#c3cbd4" stroke-width="1.2"/>
<polyline points="1112.7,296.8 1130.2,296.8 1147.6,305 1165.0,328.5 1182.5,326 1200.0,303.6 1217.4,297.3 1234.9,296.8 1252.3,334 1269.8,340.5 1287.2,340.5 1304.7,338 1322.1,303.6 1339.5,296.8 1357.0,303.6 1374.5,326 1391.9,340.5 1409.3,334.6 1426.8,331.6 1444.2,303.6 1461.7,296.8 1479.2,303.6 1496.6,326.5 1514.0,338 1531.5,343.8 1549.0,326 1566.4,306 1583.8,297.3 1601.3,296.8 1618.8,325 1636.2,332.8 1653.7,346.3 1671.1,325 1688.6,302.4 1706.0,296.8 1723.5,296.8 1740.9,327.8 1758.3,334.6 1775.8,331.6 1793.2,326 1810.7,296.8 1828.2,302.4 1845.6,296.8 1863.1,321.4 1880.5,340.5 1898.0,329 1915.4,326 1932.8,303.6" fill="none" stroke="#743872" stroke-width="2.4" stroke-linejoin="round"/>
<line x1="1190.6" y1="595.0" x2="1190.6" y2="600.5" stroke="#c3cbd4" stroke-width="1"/>
<text x="1192.2" y="616.3" font-size="11.8" fill="#80868c" textLength="52.6" lengthAdjust="spacing">12:00 PM</text>
<text x="1192.2" y="633.1" font-size="11.8" fill="#80868c" textLength="70.3" lengthAdjust="spacing">Wed Nov 27</text>
<text x="1192.2" y="649.9" font-size="11.8" fill="#80868c" textLength="28" lengthAdjust="spacing">2019</text>
<line x1="1330.2" y1="595.0" x2="1330.2" y2="600.5" stroke="#c3cbd4" stroke-width="1"/>
<text x="1331.8" y="616.3" font-size="11.8" fill="#80868c" textLength="47.4" lengthAdjust="spacing">4:00 PM</text>
<line x1="1469.8" y1="595.0" x2="1469.8" y2="600.5" stroke="#c3cbd4" stroke-width="1"/>
<text x="1471.4" y="616.3" font-size="11.8" fill="#80868c" textLength="47.6" lengthAdjust="spacing">8:00 PM</text>
<line x1="1609.4" y1="595.0" x2="1609.4" y2="600.5" stroke="#c3cbd4" stroke-width="1"/>
<text x="1611.0" y="616.3" font-size="11.8" fill="#80868c" textLength="53.7" lengthAdjust="spacing">12:00 AM</text>
<text x="1611.0" y="633.1" font-size="11.8" fill="#80868c" textLength="66.7" lengthAdjust="spacing">Thu Nov 28</text>
<line x1="1749.0" y1="595.0" x2="1749.0" y2="600.5" stroke="#c3cbd4" stroke-width="1"/>
<text x="1750.6" y="616.3" font-size="11.8" fill="#80868c" textLength="49.3" lengthAdjust="spacing">4:00 AM</text>
<line x1="1888.6" y1="595.0" x2="1888.6" y2="600.5" stroke="#c3cbd4" stroke-width="1"/>
<text x="1890.2" y="616.3" font-size="11.8" fill="#80868c" textLength="49.6" lengthAdjust="spacing">8:00 AM</text>
<text x="1079.4" y="301.1" font-size="12.3" fill="#80868c" text-anchor="end">100</text>
<text x="1079.4" y="375.8" font-size="12.3" fill="#80868c" text-anchor="end">75</text>
<text x="1079.4" y="450.3" font-size="12.3" fill="#80868c" text-anchor="end">50</text>
<text x="1079.4" y="524.8" font-size="12.3" fill="#80868c" text-anchor="end">25</text>
<text x="1966" y="301.1" font-size="12.3" fill="#80868c">1</text>
<text x="1966" y="375.8" font-size="12.3" fill="#80868c">0.75</text>
<text x="1966" y="450.3" font-size="12.3" fill="#80868c">0.5</text>
<text x="1966" y="524.8" font-size="12.3" fill="#80868c">0.25</text>
<text transform="translate(1051,445.1) rotate(-90)" font-size="13.2" fill="#80868c" text-anchor="middle" textLength="71.4" lengthAdjust="spacing">Percentage</text>
<text transform="translate(1999.5,445.5) rotate(90)" font-size="13.2" fill="#80868c" text-anchor="middle" textLength="40.6" lengthAdjust="spacing">Apdex</text>
<rect x="1327" y="661.8" width="19.5" height="14" fill="#e8141c"/>
<text x="1353.4" y="674.4" font-size="13.4" fill="#80868c" textLength="63.6" lengthAdjust="spacing">Frustrated</text>
<rect x="1441.5" y="661.8" width="19.5" height="14" fill="#f7e10b"/>
<text x="1468" y="674.4" font-size="13.4" fill="#80868c" textLength="58.6" lengthAdjust="spacing">Tolerated</text>
<rect x="1550.5" y="661.8" width="19" height="14" fill="#6ccfae"/>
<text x="1576" y="674.4" font-size="13.4" fill="#80868c" textLength="53.7" lengthAdjust="spacing">Satisfied</text>
<line x1="1654" y1="669.3" x2="1673.6" y2="669.3" stroke="#743872" stroke-width="2.4"/>
<text x="1680" y="674.4" font-size="13.4" fill="#80868c" textLength="40.6" lengthAdjust="spacing">Apdex</text>
</svg>
<div style="position:absolute;left:22px;top:698.6px;width:996px;height:2px;background:#d9dde2"></div>
<div style="position:absolute;left:517.5px;top:691.4px;width:4px;height:4px;border-radius:2px;background:#e3e5e8"></div>
<div style="position:absolute;left:801.8px;top:696px;width:203.2px;height:33px;box-sizing:border-box;background:#fff;border:1px solid #e2e4e7;border-top:none;border-radius:0 0 4px 4px;box-shadow:0 1px 2px rgba(0,0,0,0.13)"></div>
<svg style="position:absolute;left:800px;top:696px" width="210" height="34">
<circle cx="21.7" cy="13.1" r="4.6" fill="none" stroke="#666d75" stroke-width="1.7"/>
<line x1="24.9" y1="16.4" x2="28.6" y2="20" stroke="#666d75" stroke-width="2.3" stroke-linecap="round"/>
<path d="M53.1 8.5 V18.5 M49.8 15.2 L53.1 18.5 L56.4 15.2 M47.5 20.3 H58.7" fill="none" stroke="#d9dcdf" stroke-width="1.5"/>
<circle cx="83.3" cy="9.5" r="1.5" fill="#5d646b"/>
<path d="M80.6 12.5 H84.6 V19 H86.2 V20.5 H80.4 V19 H81.9 V14 H80.6 Z" fill="#5d646b"/>
<path d="M109.6 10.8 A5.7 5.7 0 1 0 113.9 8.4" fill="none" stroke="#666d75" stroke-width="1.7"/>
<path d="M107.2 13.6 L107.4 8.4 L112.3 10.2 Z" fill="#666d75"/>
</svg>
<div class="t" style="left:940.6px;top:703.6px;font-size:12px;color:#707880;font-weight:400;letter-spacing:0.7110937499999999px;">&lt;1m ago</div>
<svg style="position:absolute;left:188px;top:572px" width="32" height="38">
<g transform="translate(-188,-572)">
<path d="M199.5 593.5 L199.5 578.6 Q199.5 576.3 202 576.3 Q204.5 576.3 204.5 578.6 L204.5 584.6 Q205.2 583.3 206.6 583.3 Q208.5 583.3 208.5 585.3 Q209.2 584.6 210.6 584.6 Q212.5 584.6 212.5 586.6 Q213.1 586 214.1 586 Q215.6 586 215.6 588 L215.6 596.5 Q215.6 605.2 207.3 605.2 Q201.2 605.2 197.3 599.5 L193.2 593.6 Q192.6 592 194.2 591.8 Q196.4 591.6 199.5 593.5 Z" fill="#fff" stroke="#2b2f33" stroke-width="1.1" stroke-linejoin="round"/>
<path d="M204.5 584.6 V590.5 M208.5 585.3 V590.5 M212.5 586.6 V590.5" stroke="#2b2f33" stroke-width="0.9"/>
</g></svg>
</div></div>
<div class="wrap bl"><div style="position:absolute;left:0;top:0;width:2072px;height:64px;background:#454b59"></div><div class="inner">
<div style="position:absolute;left:0;top:0;width:2048px;height:52px;background:#454b59"></div>
<div class="t" style="left:22.3px;top:18.8px;font-size:16px;color:#c8ced6;font-weight:400;letter-spacing:0.2514999999999993px;-webkit-text-stroke:0.2px #c8ced6;">Application Summary</div>
<div class="t" style="left:218.0px;top:18.8px;font-size:16px;color:#c8ced6;font-weight:400;letter-spacing:-0.7712500000000002px;-webkit-text-stroke:0.2px #c8ced6;">SLA</div>
<div class="t" style="left:292.9px;top:18.8px;font-size:16px;color:#ffffff;font-weight:400;letter-spacing:-0.09916071428571424px;-webkit-text-stroke:0.2px #ffffff;">Real user (Web)</div>
<svg style="position:absolute;left:410.7px;top:22.5px" width="10" height="7"><path d="M0 0.5 L9 0.5 L4.5 6 Z" fill="#ffffff"/></svg>
<div class="t" style="left:461.4px;top:18.8px;font-size:16px;color:#c8ced6;font-weight:400;letter-spacing:0.07365277777777773px;-webkit-text-stroke:0.2px #c8ced6;">Real user (Desktop)</div>
<svg style="position:absolute;left:608.0px;top:22.5px" width="10" height="7"><path d="M0 0.5 L9 0.5 L4.5 6 Z" fill="#c8ced6"/></svg>
<div class="t" style="left:659.3px;top:18.8px;font-size:16px;color:#c8ced6;font-weight:400;letter-spacing:0.1213289473684211px;-webkit-text-stroke:0.2px #c8ced6;">Robot (Availability)</div>
<svg style="position:absolute;left:797.7px;top:22.5px" width="10" height="7"><path d="M0 0.5 L9 0.5 L4.5 6 Z" fill="#c8ced6"/></svg>
<div class="t" style="left:848.0px;top:18.8px;font-size:16px;color:#c8ced6;font-weight:400;letter-spacing:0.3782857142857147px;-webkit-text-stroke:0.2px #c8ced6;">Monitors</div>
<svg style="position:absolute;left:915.0px;top:22.5px" width="10" height="7"><path d="M0 0.5 L9 0.5 L4.5 6 Z" fill="#c8ced6"/></svg>
<div class="t" style="left:966.6px;top:18.8px;font-size:16px;color:#c8ced6;font-weight:400;letter-spacing:0.06270833333333314px;-webkit-text-stroke:0.2px #c8ced6;">Reports</div>
<svg style="position:absolute;left:1026.0px;top:22.5px" width="10" height="7"><path d="M0 0.5 L9 0.5 L4.5 6 Z" fill="#c8ced6"/></svg>
<div class="t" style="left:1077.5px;top:18.8px;font-size:16px;color:#c8ced6;font-weight:400;letter-spacing:0.35571153846153875px;-webkit-text-stroke:0.2px #c8ced6;">Administration</div>
<svg style="position:absolute;left:1186.5px;top:22.5px" width="10" height="7"><path d="M0 0.5 L9 0.5 L4.5 6 Z" fill="#c8ced6"/></svg>
<div class="t" style="left:1231.8px;top:18.8px;font-size:16px;color:#c8ced6;font-weight:400;letter-spacing:0.22025000000000006px;-webkit-text-stroke:0.2px #c8ced6;">Alerts</div>
<div class="t" style="left:1315.0px;top:18.8px;font-size:16px;color:#c8ced6;font-weight:400;letter-spacing:0.21400000000000022px;-webkit-text-stroke:0.2px #c8ced6;">Dashboards</div>
<div class="t" style="left:1443.0px;top:18.8px;font-size:16px;color:#c8ced6;font-weight:400;letter-spacing:0.18085000000000093px;-webkit-text-stroke:0.2px #c8ced6;">Search</div>
<div style="position:absolute;left:290.6px;top:48px;width:125.4px;height:4px;background:#1a9ccd;border-radius:2px 2px 0 0"></div>
<div class="t" style="left:1983.8px;top:17.3px;font-size:18.5px;color:#ffffff;font-weight:700;letter-spacing:0px;">UXM</div>
<div class="t" style="left:23.3px;top:75.9px;font-size:25.5px;color:#3a4049;font-weight:400;letter-spacing:1.4016250000000001px;-webkit-text-stroke:0.6px #3a4049;">Web - Analysis</div>
<div class="t" style="left:222.2px;top:86.5px;font-size:13px;color:#4f98c0;font-weight:400;letter-spacing:0.6982272727272736px;-webkit-text-stroke:0.45px #4f98c0;">Show Filters</div>
<div style="position:absolute;left:1787.8px;top:65.5px;width:63px;height:38px;box-sizing:border-box;border:1px solid #c9cfd6;border-radius:3px;background:#f7f8fa"></div><div class="t" style="left:1806.4px;top:76.5px;font-size:16px;color:#6a7077;font-weight:400;letter-spacing:0px;">Edit</div>
<div style="position:absolute;left:1863.4px;top:65.5px;width:100px;height:38px;box-sizing:border-box;border:1px solid #c9cfd6;border-radius:3px;background:#f7f8fa"></div><div class="t" style="left:1880.7px;top:76.5px;font-size:16px;color:#6a7077;font-weight:400;letter-spacing:0px;">Export</div><svg style="position:absolute;left:1939.4px;top:81px" width="10" height="7"><path d="M0 0.5 L9 0.5 L4.5 6 Z" fill="#6a7077"/></svg>
<div style="position:absolute;left:1975px;top:65.5px;width:49.5px;height:38px;box-sizing:border-box;border:1px solid #c9cfd6;border-radius:3px;background:#f7f8fa"></div><div class="t" style="left:1991.5px;top:76.5px;font-size:16px;color:#6a7077;font-weight:400;letter-spacing:0px;">...</div>
<div style="position:absolute;left:22px;top:118px;width:2003.5px;height:111px;background:#fff"></div>
<div style="position:absolute;left:22px;top:235.5px;width:996px;height:463px;background:#fff"></div>
<div style="position:absolute;left:1024.3px;top:235.5px;width:1001.2px;height:463px;background:#fff"></div>
<div style="position:absolute;left:22px;top:705.4px;width:996px;height:350px;background:#fff"></div>
<div style="position:absolute;left:1024.3px;top:705.4px;width:1001.2px;height:350px;background:#fff"></div>
<div class="t" style="left:36.5px;top:134.4px;font-size:15.5px;color:#5c6773;font-weight:400;letter-spacing:0.5694837239583338px;">Choose a view</div>
<div style="position:absolute;left:36.5px;top:154.4px;width:222.3px;height:38.5px;box-sizing:border-box;border:1.5px solid #72a9c4;border-radius:3.5px;background:#fff"></div>
<div class="t" style="left:54.7px;top:165.7px;font-size:15.5px;color:#71777e;font-weight:400;letter-spacing:0.5022012648809528px;">Show Performance Trend</div>
<div class="t" style="left:276.8px;top:165.7px;font-size:15.5px;color:#71777e;font-weight:400;letter-spacing:0.46524316406249966px;">Show Transactions</div>
<div class="t" style="left:451.8px;top:165.7px;font-size:15.5px;color:#71777e;font-weight:400;letter-spacing:0.4383142361111112px;">Show Users</div>
<div class="t" style="left:575.9px;top:165.7px;font-size:15.5px;color:#71777e;font-weight:400;letter-spacing:0.3464482421875008px;">Show Urls</div>
<div class="t" style="left:686.0px;top:165.7px;font-size:15.5px;color:#71777e;font-weight:400;letter-spacing:0.664441406249999px;">Show World View</div>
<div class="t" style="left:852.0px;top:165.7px;font-size:15.5px;color:#71777e;font-weight:400;letter-spacing:0.5283497596153841px;">Show Locations</div>
<div class="t" style="left:1004.0px;top:165.7px;font-size:15.5px;color:#71777e;font-weight:400;letter-spacing:0.5853470052083338px;">Show Browsers</div>
<div class="t" style="left:36.5px;top:250.5px;font-size:17.5px;color:#5c6773;font-weight:400;letter-spacing:0.4543584280303028px;">Performance Trend (15m Resolution)</div>
<div class="t" style="left:1038.6px;top:250.5px;font-size:17.5px;color:#5c6773;font-weight:400;letter-spacing:0.31452343749999956px;">SLA Trend (15m Resolution)</div>
<div class="t" style="left:36.0px;top:720.5px;font-size:17.5px;color:#5c6773;font-weight:400;letter-spacing:0.5914407835144923px;">Performance History (This week versus last 6 weeks, Hourly Resolution)</div>
<div class="t" style="left:1038.0px;top:720.5px;font-size:17.5px;color:#5c6773;font-weight:400;letter-spacing:0.5921187279929565px;">Performance History (This month versus last 6 months, Hourly Resolution)</div>
<div style="position:absolute;left:22px;top:747px;width:996px;height:38px;background:#e1e6eb"></div><div style="position:absolute;left:550.3px;top:747px;width:2.5px;height:38px;background:#f1f3f6"></div><div class="t" style="left:36.0px;top:757.4px;font-size:15.2px;color:#60666c;font-weight:400;letter-spacing:0.7245500000000007px;">Metric</div><svg style="position:absolute;left:88px;top:759px" width="9" height="13"><path d="M1.2 5 L4.5 1.2 L7.8 5 Z M1.2 8 L4.5 11.8 L7.8 8 Z" fill="#6b7580"/></svg><div class="t" style="left:566.0px;top:757.4px;font-size:15.2px;color:#60666c;font-weight:400;letter-spacing:0.49759423076923126px;">2019 - Week 47</div><svg style="position:absolute;left:686.5px;top:759px" width="9" height="13"><path d="M1.2 5 L4.5 1.2 L7.8 5 Z M1.2 8 L4.5 11.8 L7.8 8 Z" fill="#6b7580"/></svg><div style="position:absolute;left:22px;top:785.0px;width:996px;height:38.5px;background:#ffffff"></div><div class="t" style="left:36.0px;top:795.5px;font-size:15.2px;color:#60666c;font-weight:400;letter-spacing:0.6488286764705887px;-webkit-text-stroke:0.1px #60666c;">Avg. Response Time</div><div class="t" style="left:565.0px;top:795.5px;font-size:15.2px;color:#60666c;font-weight:400;letter-spacing:0.19888333333333463px;-webkit-text-stroke:0.1px #60666c;">2.7 sec</div><div style="position:absolute;left:22px;top:823.4px;width:996px;height:38.5px;background:#f2f4f6"></div><div class="t" style="left:36.0px;top:834.0px;font-size:15.2px;color:#60666c;font-weight:400;letter-spacing:0.8144107142857138px;-webkit-text-stroke:0.1px #60666c;">50th Percentile</div><div class="t" style="left:565.0px;top:834.0px;font-size:15.2px;color:#60666c;font-weight:400;letter-spacing:-0.08444999999999918px;-webkit-text-stroke:0.1px #60666c;">1.5 sec</div><div style="position:absolute;left:22px;top:861.9px;width:996px;height:38.5px;background:#ffffff"></div><div class="t" style="left:36.0px;top:872.4px;font-size:15.2px;color:#60666c;font-weight:400;letter-spacing:0.8144107142857138px;-webkit-text-stroke:0.1px #60666c;">90th Percentile</div><div class="t" style="left:565.0px;top:872.4px;font-size:15.2px;color:#60666c;font-weight:400;letter-spacing:0.5488833333333337px;-webkit-text-stroke:0.1px #60666c;">5.3 sec</div><div style="position:absolute;left:22px;top:900.3px;width:996px;height:38.5px;background:#f2f4f6"></div><div class="t" style="left:36.0px;top:910.8px;font-size:15.2px;color:#60666c;font-weight:400;letter-spacing:0.7929821428571425px;-webkit-text-stroke:0.1px #60666c;">95th Percentile</div><div class="t" style="left:565.0px;top:910.8px;font-size:15.2px;color:#60666c;font-weight:400;letter-spacing:0.6655500000000009px;-webkit-text-stroke:0.1px #60666c;">5.8 sec</div><div style="position:absolute;left:22px;top:938.7px;width:996px;height:38.5px;background:#ffffff"></div><div class="t" style="left:36.0px;top:949.3px;font-size:15.2px;color:#60666c;font-weight:400;letter-spacing:0.7929821428571425px;-webkit-text-stroke:0.1px #60666c;">98th Percentile</div><div class="t" style="left:565.0px;top:949.3px;font-size:15.2px;color:#60666c;font-weight:400;letter-spacing:0.5488833333333337px;-webkit-text-stroke:0.1px #60666c;">6.3 sec</div><div style="position:absolute;left:22px;top:977.1px;width:996px;height:38.5px;background:#f2f4f6"></div><div class="t" style="left:36.0px;top:987.7px;font-size:15.2px;color:#60666c;font-weight:400;letter-spacing:0.538632291666668px;-webkit-text-stroke:0.1px #60666c;">Page Requests</div><div class="t" style="left:565.0px;top:987.7px;font-size:15.2px;color:#60666c;font-weight:400;letter-spacing:-0.18601666666666597px;-webkit-text-stroke:0.1px #60666c;">1116</div><div style="position:absolute;left:22px;top:1015.6px;width:996px;height:38.5px;background:#ffffff"></div><div class="t" style="left:36.0px;top:1026.1px;font-size:15.2px;color:#60666c;font-weight:400;letter-spacing:1.3502187499999998px;-webkit-text-stroke:0.1px #60666c;">Apdex</div><div class="t" style="left:565.0px;top:1026.1px;font-size:15.2px;color:#60666c;font-weight:400;letter-spacing:0.9720958333333343px;-webkit-text-stroke:0.1px #60666c;">0.92</div>
<div style="position:absolute;left:1024.3px;top:747px;width:1001.2px;height:38px;background:#e1e6eb"></div><div style="position:absolute;left:1632.4px;top:747px;width:2.5px;height:38px;background:#f1f3f6"></div><div class="t" style="left:1038.3px;top:757.4px;font-size:15.2px;color:#60666c;font-weight:400;letter-spacing:0.7245500000000007px;">Metric</div><svg style="position:absolute;left:1090.3px;top:759px" width="9" height="13"><path d="M1.2 5 L4.5 1.2 L7.8 5 Z M1.2 8 L4.5 11.8 L7.8 8 Z" fill="#6b7580"/></svg><div class="t" style="left:1648.6px;top:757.4px;font-size:15.2px;color:#60666c;font-weight:400;letter-spacing:0.7617321428571435px;">2019 Nov</div><svg style="position:absolute;left:1725px;top:759px" width="9" height="13"><path d="M1.2 5 L4.5 1.2 L7.8 5 Z M1.2 8 L4.5 11.8 L7.8 8 Z" fill="#6b7580"/></svg><div style="position:absolute;left:1024.3px;top:785.0px;width:1001.2px;height:38.5px;background:#ffffff"></div><div class="t" style="left:1038.3px;top:795.5px;font-size:15.2px;color:#60666c;font-weight:400;letter-spacing:0.6488286764705887px;-webkit-text-stroke:0.1px #60666c;">Avg. Response Time</div><div class="t" style="left:1647.6px;top:795.5px;font-size:15.2px;color:#60666c;font-weight:400;letter-spacing:0.19888333333333463px;-webkit-text-stroke:0.1px #60666c;">2.7 sec</div><div style="position:absolute;left:1024.3px;top:823.4px;width:1001.2px;height:38.5px;background:#f2f4f6"></div><div class="t" style="left:1038.3px;top:834.0px;font-size:15.2px;color:#60666c;font-weight:400;letter-spacing:0.8144107142857138px;-webkit-text-stroke:0.1px #60666c;">50th Percentile</div><div class="t" style="left:1647.6px;top:834.0px;font-size:15.2px;color:#60666c;font-weight:400;letter-spacing:-0.08444999999999918px;-webkit-text-stroke:0.1px #60666c;">1.5 sec</div><div style="position:absolute;left:1024.3px;top:861.9px;width:1001.2px;height:38.5px;background:#ffffff"></div><div class="t" style="left:1038.3px;top:872.4px;font-size:15.2px;color:#60666c;font-weight:400;letter-spacing:0.8144107142857138px;-webkit-text-stroke:0.1px #60666c;">90th Percentile</div><div class="t" style="left:1647.6px;top:872.4px;font-size:15.2px;color:#60666c;font-weight:400;letter-spacing:0.5488833333333337px;-webkit-text-stroke:0.1px #60666c;">5.3 sec</div><div style="position:absolute;left:1024.3px;top:900.3px;width:1001.2px;height:38.5px;background:#f2f4f6"></div><div class="t" style="left:1038.3px;top:910.8px;font-size:15.2px;color:#60666c;font-weight:400;letter-spacing:0.7929821428571425px;-webkit-text-stroke:0.1px #60666c;">95th Percentile</div><div class="t" style="left:1647.6px;top:910.8px;font-size:15.2px;color:#60666c;font-weight:400;letter-spacing:0.6655500000000009px;-webkit-text-stroke:0.1px #60666c;">5.8 sec</div><div style="position:absolute;left:1024.3px;top:938.7px;width:1001.2px;height:38.5px;background:#ffffff"></div><div class="t" style="left:1038.3px;top:949.3px;font-size:15.2px;color:#60666c;font-weight:400;letter-spacing:0.7929821428571425px;-webkit-text-stroke:0.1px #60666c;">98th Percentile</div><div class="t" style="left:1647.6px;top:949.3px;font-size:15.2px;color:#60666c;font-weight:400;letter-spacing:0.5488833333333337px;-webkit-text-stroke:0.1px #60666c;">6.3 sec</div><div style="position:absolute;left:1024.3px;top:977.1px;width:1001.2px;height:38.5px;background:#f2f4f6"></div><div class="t" style="left:1038.3px;top:987.7px;font-size:15.2px;color:#60666c;font-weight:400;letter-spacing:0.538632291666668px;-webkit-text-stroke:0.1px #60666c;">Page Requests</div><div class="t" style="left:1647.6px;top:987.7px;font-size:15.2px;color:#60666c;font-weight:400;letter-spacing:-0.18601666666666597px;-webkit-text-stroke:0.1px #60666c;">1116</div><div style="position:absolute;left:1024.3px;top:1015.6px;width:1001.2px;height:38.5px;background:#ffffff"></div><div class="t" style="left:1038.3px;top:1026.1px;font-size:15.2px;color:#60666c;font-weight:400;letter-spacing:1.3502187499999998px;-webkit-text-stroke:0.1px #60666c;">Apdex</div><div class="t" style="left:1647.6px;top:1026.1px;font-size:15.2px;color:#60666c;font-weight:400;letter-spacing:0.9720958333333343px;-webkit-text-stroke:0.1px #60666c;">0.92</div>
<svg style="position:absolute;left:0;top:0" width="2048" height="1229" font-family='"Liberation Sans", sans-serif'>
<line x1="80.3" y1="296.9" x2="962" y2="296.9" stroke="#e9ebee" stroke-width="1"/>
<line x1="80.3" y1="371.3" x2="962" y2="371.3" stroke="#e9ebee" stroke-width="1"/>
<line x1="80.3" y1="446.0" x2="962" y2="446.0" stroke="#e9ebee" stroke-width="1"/>
<line x1="80.3" y1="520.5" x2="962" y2="520.5" stroke="#e9ebee" stroke-width="1"/>
<rect x="98.70" y="576" width="15" height="19.1" fill="#2499cf"/>
<rect x="116.37" y="582" width="15" height="13.1" fill="#2499cf"/>
<rect x="134.04" y="500.8" width="15" height="94.3" fill="#2499cf"/>
<rect x="151.71" y="452" width="15" height="143.1" fill="#2499cf"/>
<rect x="169.38" y="482" width="15" height="113.1" fill="#2499cf"/>
<rect x="187.05" y="472" width="15" height="123.1" fill="#2499cf"/>
<rect x="204.72" y="500.8" width="15" height="94.3" fill="#2499cf"/>
<rect x="222.39" y="491.7" width="15" height="103.4" fill="#2499cf"/>
<rect x="240.06" y="426.7" width="15" height="168.4" fill="#2499cf"/>
<rect x="257.73" y="412" width="15" height="183.1" fill="#2499cf"/>
<rect x="275.40" y="426.7" width="15" height="168.4" fill="#2499cf"/>
<rect x="293.07" y="387" width="15" height="208.1" fill="#2499cf"/>
<rect x="310.74" y="472" width="15" height="123.1" fill="#2499cf"/>
<rect x="328.41" y="491.7" width="15" height="103.4" fill="#2499cf"/>
<rect x="346.08" y="491.7" width="15" height="103.4" fill="#2499cf"/>
<rect x="363.75" y="452" width="15" height="143.1" fill="#2499cf"/>
<rect x="381.42" y="442" width="15" height="153.1" fill="#2499cf"/>
<rect x="399.09" y="406.8" width="15" height="188.3" fill="#2499cf"/>
<rect x="416.76" y="461.6" width="15" height="133.5" fill="#2499cf"/>
<rect x="434.43" y="452" width="15" height="143.1" fill="#2499cf"/>
<rect x="452.10" y="491.7" width="15" height="103.4" fill="#2499cf"/>
<rect x="469.77" y="491.7" width="15" height="103.4" fill="#2499cf"/>
<rect x="487.44" y="456.7" width="15" height="138.4" fill="#2499cf"/>
<rect x="505.11" y="442" width="15" height="153.1" fill="#2499cf"/>
<rect x="522.78" y="437" width="15" height="158.1" fill="#2499cf"/>
<rect x="540.45" y="467.5" width="15" height="127.6" fill="#2499cf"/>
<rect x="558.12" y="367.3" width="15" height="227.8" fill="#2499cf"/>
<rect x="575.79" y="491.7" width="15" height="103.4" fill="#2499cf"/>
<rect x="593.46" y="491.7" width="15" height="103.4" fill="#2499cf"/>
<rect x="611.13" y="456.7" width="15" height="138.4" fill="#2499cf"/>
<rect x="628.80" y="442" width="15" height="153.1" fill="#2499cf"/>
<rect x="646.47" y="437" width="15" height="158.1" fill="#2499cf"/>
<rect x="664.14" y="472" width="15" height="123.1" fill="#2499cf"/>
<rect x="681.81" y="482" width="15" height="113.1" fill="#2499cf"/>
<rect x="699.48" y="491.7" width="15" height="103.4" fill="#2499cf"/>
<rect x="717.15" y="491.7" width="15" height="103.4" fill="#2499cf"/>
<rect x="734.82" y="456.7" width="15" height="138.4" fill="#2499cf"/>
<rect x="752.49" y="426.7" width="15" height="168.4" fill="#2499cf"/>
<rect x="770.16" y="437" width="15" height="158.1" fill="#2499cf"/>
<rect x="787.83" y="472" width="15" height="123.1" fill="#2499cf"/>
<rect x="805.50" y="482" width="15" height="113.1" fill="#2499cf"/>
<rect x="823.17" y="452" width="15" height="143.1" fill="#2499cf"/>
<rect x="840.84" y="491.5" width="15" height="103.6" fill="#2499cf"/>
<rect x="858.51" y="461.5" width="15" height="133.6" fill="#2499cf"/>
<rect x="876.18" y="437" width="15" height="158.1" fill="#2499cf"/>
<rect x="893.85" y="447" width="15" height="148.1" fill="#2499cf"/>
<rect x="911.52" y="467.4" width="15" height="127.7" fill="#2499cf"/>
<rect x="929.19" y="477.3" width="15" height="117.8" fill="#2499cf"/>
<line x1="79.8" y1="595.1" x2="962" y2="595.1" stroke="#c3cbd4" stroke-width="1.2"/>
<polyline points="88.5,595.1 106.2,557.8 123.9,576.5 141.5,362.1 159.2,380.8 176.9,315.5 194.6,352.8 212.2,371.4 229.9,380.8 247.6,362.1 265.2,352.8 282.9,343.5 300.6,380.8 318.2,380.8 335.9,371.4 353.6,371.4 371.2,371.4 388.9,380.8 406.6,371.4 424.3,371.4 441.9,371.4 459.6,343.5 477.3,408.7 494.9,362.1 512.6,371.4 530.3,362.1 548.0,352.8 565.6,371.4 583.3,399.4 601.0,343.5 618.6,371.4 636.3,343.5 654.0,380.8 671.6,362.1 689.3,371.4 707.0,371.4 724.7,399.4 742.3,371.4 760.0,371.4 777.7,371.4 795.3,380.8 813.0,343.5 830.7,390.1 848.3,371.4 866.0,362.1 883.7,408.7 901.4,376.1 919.0,343.5 936.7,371.4 954.4,595.1" fill="none" stroke="#e2a737" stroke-width="2.2" stroke-linejoin="miter"/>
<line x1="184.3" y1="595.1" x2="184.3" y2="600.6" stroke="#c3cbd4" stroke-width="1"/>
<text x="185.9" y="616.3" font-size="11.8" fill="#80868c" textLength="52.6" lengthAdjust="spacing">12:00 PM</text>
<text x="185.9" y="633.1" font-size="11.8" fill="#80868c" textLength="70.3" lengthAdjust="spacing">Wed Nov 27</text>
<text x="185.9" y="649.9" font-size="11.8" fill="#80868c" textLength="28" lengthAdjust="spacing">2019</text>
<line x1="325.7" y1="595.1" x2="325.7" y2="600.6" stroke="#c3cbd4" stroke-width="1"/>
<text x="327.3" y="616.3" font-size="11.8" fill="#80868c" textLength="47.4" lengthAdjust="spacing">4:00 PM</text>
<line x1="467.1" y1="595.1" x2="467.1" y2="600.6" stroke="#c3cbd4" stroke-width="1"/>
<text x="468.7" y="616.3" font-size="11.8" fill="#80868c" textLength="47.6" lengthAdjust="spacing">8:00 PM</text>
<line x1="608.5" y1="595.1" x2="608.5" y2="600.6" stroke="#c3cbd4" stroke-width="1"/>
<text x="610.1" y="616.3" font-size="11.8" fill="#80868c" textLength="53.7" lengthAdjust="spacing">12:00 AM</text>
<text x="610.1" y="633.1" font-size="11.8" fill="#80868c" textLength="66.7" lengthAdjust="spacing">Thu Nov 28</text>
<line x1="749.9" y1="595.1" x2="749.9" y2="600.6" stroke="#c3cbd4" stroke-width="1"/>
<text x="751.5" y="616.3" font-size="11.8" fill="#80868c" textLength="49.3" lengthAdjust="spacing">4:00 AM</text>
<line x1="891.3" y1="595.1" x2="891.3" y2="600.6" stroke="#c3cbd4" stroke-width="1"/>
<text x="892.9" y="616.3" font-size="11.8" fill="#80868c" textLength="49.6" lengthAdjust="spacing">8:00 AM</text>
<text x="71.8" y="301.2" font-size="12.3" fill="#80868c" text-anchor="end">6</text>
<text x="71.8" y="375.6" font-size="12.3" fill="#80868c" text-anchor="end">4.5</text>
<text x="71.8" y="450.3" font-size="12.3" fill="#80868c" text-anchor="end">3</text>
<text x="71.8" y="524.8" font-size="12.3" fill="#80868c" text-anchor="end">1.5</text>
<text x="970.6" y="301.2" font-size="12.3" fill="#80868c">32</text>
<text x="970.6" y="375.6" font-size="12.3" fill="#80868c">24</text>
<text x="970.6" y="450.3" font-size="12.3" fill="#80868c">16</text>
<text x="970.6" y="524.8" font-size="12.3" fill="#80868c">8</text>
<text transform="translate(47.6,445.5) rotate(-90)" font-size="12.6" fill="#80868c" text-anchor="middle" textLength="161.9" lengthAdjust="spacing">Avg. Response Time (sec)</text>
<text transform="translate(992.6,446) rotate(90)" font-size="12.8" fill="#80868c" text-anchor="middle" textLength="95" lengthAdjust="spacing">Page Requests</text>
<rect x="353.3" y="661.8" width="18.7" height="14" fill="#2499cf"/>
<text x="378.9" y="674.4" font-size="13.4" fill="#80868c" textLength="161.9" lengthAdjust="spacing">Avg. Response Time (sec)</text>
<line x1="566" y1="669.8" x2="584.7" y2="669.8" stroke="#e2a737" stroke-width="2.2"/>
<text x="591.5" y="674.4" font-size="13.4" fill="#80868c" textLength="94" lengthAdjust="spacing">Page Requests</text>
<line x1="1086.4" y1="296.8" x2="1959" y2="296.8" stroke="#e9ebee" stroke-width="1"/>
<line x1="1086.4" y1="371.5" x2="1959" y2="371.5" stroke="#e9ebee" stroke-width="1"/>
<line x1="1086.4" y1="446.0" x2="1959" y2="446.0" stroke="#e9ebee" stroke-width="1"/>
<line x1="1086.4" y1="520.5" x2="1959" y2="520.5" stroke="#e9ebee" stroke-width="1"/>
<rect x="1105.20" y="296.8" width="15" height="298.2" fill="#6ccfae"/>
<rect x="1122.65" y="296.8" width="15" height="298.2" fill="#6ccfae"/>
<rect x="1140.10" y="318.9" width="15" height="276.1" fill="#6ccfae"/>
<rect x="1140.10" y="296.8" width="15" height="22.1" fill="#f7e10b"/>
<rect x="1157.55" y="364" width="15" height="231.0" fill="#6ccfae"/>
<rect x="1157.55" y="296.8" width="15" height="67.2" fill="#f7e10b"/>
<rect x="1175.00" y="360.8" width="15" height="234.2" fill="#6ccfae"/>
<rect x="1175.00" y="296.8" width="15" height="64.0" fill="#f7e10b"/>
<rect x="1192.45" y="309" width="15" height="286.0" fill="#6ccfae"/>
<rect x="1192.45" y="296.8" width="15" height="12.2" fill="#f7e10b"/>
<rect x="1209.90" y="296.8" width="15" height="298.2" fill="#6ccfae"/>
<rect x="1227.35" y="296.8" width="15" height="298.2" fill="#6ccfae"/>
<rect x="1244.80" y="381.6" width="15" height="213.4" fill="#6ccfae"/>
<rect x="1244.80" y="296.8" width="15" height="84.8" fill="#f7e10b"/>
<rect x="1262.25" y="390" width="15" height="205.0" fill="#6ccfae"/>
<rect x="1262.25" y="296.8" width="15" height="93.2" fill="#f7e10b"/>
<rect x="1279.70" y="387" width="15" height="208.0" fill="#6ccfae"/>
<rect x="1279.70" y="296.8" width="15" height="90.2" fill="#f7e10b"/>
<rect x="1297.15" y="373.7" width="15" height="221.3" fill="#6ccfae"/>
<rect x="1297.15" y="296.8" width="15" height="10.7" fill="#e8141c"/>
<rect x="1297.15" y="307.5" width="15" height="66.2" fill="#f7e10b"/>
<rect x="1314.60" y="309" width="15" height="286.0" fill="#6ccfae"/>
<rect x="1314.60" y="296.8" width="15" height="12.2" fill="#f7e10b"/>
<rect x="1332.05" y="296.8" width="15" height="298.2" fill="#6ccfae"/>
<rect x="1349.50" y="312.5" width="15" height="282.5" fill="#6ccfae"/>
<rect x="1349.50" y="296.8" width="15" height="15.7" fill="#f7e10b"/>
<rect x="1366.95" y="356" width="15" height="239.0" fill="#6ccfae"/>
<rect x="1366.95" y="296.8" width="15" height="59.2" fill="#f7e10b"/>
<rect x="1384.40" y="388.7" width="15" height="206.3" fill="#6ccfae"/>
<rect x="1384.40" y="296.8" width="15" height="91.9" fill="#f7e10b"/>
<rect x="1401.85" y="381.6" width="15" height="213.4" fill="#6ccfae"/>
<rect x="1401.85" y="296.8" width="15" height="84.8" fill="#f7e10b"/>
<rect x="1419.30" y="372.7" width="15" height="222.3" fill="#6ccfae"/>
<rect x="1419.30" y="296.8" width="15" height="75.9" fill="#f7e10b"/>
<rect x="1436.75" y="307.5" width="15" height="287.5" fill="#6ccfae"/>
<rect x="1436.75" y="296.8" width="15" height="10.7" fill="#f7e10b"/>
<rect x="1454.20" y="296.8" width="15" height="298.2" fill="#6ccfae"/>
<rect x="1471.65" y="310.75" width="15" height="284.2" fill="#6ccfae"/>
<rect x="1471.65" y="296.8" width="15" height="13.9" fill="#f7e10b"/>
<rect x="1489.10" y="358" width="15" height="237.0" fill="#6ccfae"/>
<rect x="1489.10" y="296.8" width="15" height="61.2" fill="#f7e10b"/>
<rect x="1506.55" y="383.6" width="15" height="211.4" fill="#6ccfae"/>
<rect x="1506.55" y="296.8" width="15" height="86.8" fill="#f7e10b"/>
<rect x="1524.00" y="392" width="15" height="203.0" fill="#6ccfae"/>
<rect x="1524.00" y="296.8" width="15" height="95.2" fill="#f7e10b"/>
<rect x="1541.45" y="354.4" width="15" height="240.6" fill="#6ccfae"/>
<rect x="1541.45" y="296.8" width="15" height="57.6" fill="#f7e10b"/>
<rect x="1558.90" y="306" width="15" height="289.0" fill="#6ccfae"/>
<rect x="1558.90" y="296.8" width="15" height="9.2" fill="#e8141c"/>
<rect x="1576.35" y="296.8" width="15" height="298.2" fill="#6ccfae"/>
<rect x="1593.80" y="296.8" width="15" height="298.2" fill="#6ccfae"/>
<rect x="1611.25" y="360.8" width="15" height="234.2" fill="#6ccfae"/>
<rect x="1611.25" y="296.8" width="15" height="64.0" fill="#f7e10b"/>
<rect x="1628.70" y="375.3" width="15" height="219.7" fill="#6ccfae"/>
<rect x="1628.70" y="296.8" width="15" height="78.5" fill="#f7e10b"/>
<rect x="1646.15" y="390" width="15" height="205.0" fill="#6ccfae"/>
<rect x="1646.15" y="296.8" width="15" height="93.2" fill="#f7e10b"/>
<rect x="1663.60" y="356.5" width="15" height="238.5" fill="#6ccfae"/>
<rect x="1663.60" y="296.8" width="15" height="59.7" fill="#f7e10b"/>
<rect x="1681.05" y="310.75" width="15" height="284.2" fill="#6ccfae"/>
<rect x="1681.05" y="296.8" width="15" height="13.9" fill="#f7e10b"/>
<rect x="1698.50" y="296.8" width="15" height="298.2" fill="#6ccfae"/>
<rect x="1715.95" y="296.8" width="15" height="298.2" fill="#6ccfae"/>
<rect x="1733.40" y="361.5" width="15" height="233.5" fill="#6ccfae"/>
<rect x="1733.40" y="296.8" width="15" height="64.7" fill="#f7e10b"/>
<rect x="1750.85" y="372.7" width="15" height="222.3" fill="#6ccfae"/>
<rect x="1750.85" y="296.8" width="15" height="75.9" fill="#f7e10b"/>
<rect x="1768.30" y="385.4" width="15" height="209.6" fill="#6ccfae"/>
<rect x="1768.30" y="296.8" width="15" height="88.6" fill="#f7e10b"/>
<rect x="1785.75" y="363.3" width="15" height="231.7" fill="#6ccfae"/>
<rect x="1785.75" y="296.8" width="15" height="66.5" fill="#f7e10b"/>
<rect x="1803.20" y="296.8" width="15" height="298.2" fill="#6ccfae"/>
<rect x="1820.65" y="310.75" width="15" height="284.2" fill="#6ccfae"/>
<rect x="1820.65" y="296.8" width="15" height="13.9" fill="#f7e10b"/>
<rect x="1838.10" y="296.8" width="15" height="298.2" fill="#6ccfae"/>
<rect x="1855.55" y="352.4" width="15" height="242.6" fill="#6ccfae"/>
<rect x="1855.55" y="296.8" width="15" height="55.6" fill="#f7e10b"/>
<rect x="1873.00" y="385.4" width="15" height="209.6" fill="#6ccfae"/>
<rect x="1873.00" y="296.8" width="15" height="88.6" fill="#f7e10b"/>
<rect x="1890.45" y="371" width="15" height="224.0" fill="#6ccfae"/>
<rect x="1890.45" y="296.8" width="15" height="74.2" fill="#f7e10b"/>
<rect x="1907.90" y="363.3" width="15" height="231.7" fill="#6ccfae"/>
<rect x="1907.90" y="296.8" width="15" height="66.5" fill="#f7e10b"/>
<rect x="1925.35" y="307.5" width="15" height="287.5" fill="#6ccfae"/>
<rect x="1925.35" y="296.8" width="15" height="10.7" fill="#f7e10b"/>
<line x1="1086.4" y1="595.0" x2="1959" y2="595.0" stroke="#c3cbd4" stroke-width="1.2"/>
<polyline points="1112.7,296.8 1130.2,296.8 1147.6,305 1165.0,328.5 1182.5,326 1200.0,303.6 1217.4,297.3 1234.9,296.8 1252.3,334 1269.8,340.5 1287.2,340.5 1304.7,338 1322.1,303.6 1339.5,296.8 1357.0,303.6 1374.5,326 1391.9,340.5 1409.3,334.6 1426.8,331.6 1444.2,303.6 1461.7,296.8 1479.2,303.6 1496.6,326.5 1514.0,338 1531.5,343.8 1549.0,326 1566.4,306 1583.8,297.3 1601.3,296.8 1618.8,325 1636.2,332.8 1653.7,346.3 1671.1,325 1688.6,302.4 1706.0,296.8 1723.5,296.8 1740.9,327.8 1758.3,334.6 1775.8,331.6 1793.2,326 1810.7,296.8 1828.2,302.4 1845.6,296.8 1863.1,321.4 1880.5,340.5 1898.0,329 1915.4,326 1932.8,303.6" fill="none" stroke="#743872" stroke-width="2.4" stroke-linejoin="round"/>
<line x1="1190.6" y1="595.0" x2="1190.6" y2="600.5" stroke="#c3cbd4" stroke-width="1"/>
<text x="1192.2" y="616.3" font-size="11.8" fill="#80868c" textLength="52.6" lengthAdjust="spacing">12:00 PM</text>
<text x="1192.2" y="633.1" font-size="11.8" fill="#80868c" textLength="70.3" lengthAdjust="spacing">Wed Nov 27</text>
<text x="1192.2" y="649.9" font-size="11.8" fill="#80868c" textLength="28" lengthAdjust="spacing">2019</text>
<line x1="1330.2" y1="595.0" x2="1330.2" y2="600.5" stroke="#c3cbd4" stroke-width="1"/>
<text x="1331.8" y="616.3" font-size="11.8" fill="#80868c" textLength="47.4" lengthAdjust="spacing">4:00 PM</text>
<line x1="1469.8" y1="595.0" x2="1469.8" y2="600.5" stroke="#c3cbd4" stroke-width="1"/>
<text x="1471.4" y="616.3" font-size="11.8" fill="#80868c" textLength="47.6" lengthAdjust="spacing">8:00 PM</text>
<line x1="1609.4" y1="595.0" x2="1609.4" y2="600.5" stroke="#c3cbd4" stroke-width="1"/>
<text x="1611.0" y="616.3" font-size="11.8" fill="#80868c" textLength="53.7" lengthAdjust="spacing">12:00 AM</text>
<text x="1611.0" y="633.1" font-size="11.8" fill="#80868c" textLength="66.7" lengthAdjust="spacing">Thu Nov 28</text>
<line x1="1749.0" y1="595.0" x2="1749.0" y2="600.5" stroke="#c3cbd4" stroke-width="1"/>
<text x="1750.6" y="616.3" font-size="11.8" fill="#80868c" textLength="49.3" lengthAdjust="spacing">4:00 AM</text>
<line x1="1888.6" y1="595.0" x2="1888.6" y2="600.5" stroke="#c3cbd4" stroke-width="1"/>
<text x="1890.2" y="616.3" font-size="11.8" fill="#80868c" textLength="49.6" lengthAdjust="spacing">8:00 AM</text>
<text x="1079.4" y="301.1" font-size="12.3" fill="#80868c" text-anchor="end">100</text>
<text x="1079.4" y="375.8" font-size="12.3" fill="#80868c" text-anchor="end">75</text>
<text x="1079.4" y="450.3" font-size="12.3" fill="#80868c" text-anchor="end">50</text>
<text x="1079.4" y="524.8" font-size="12.3" fill="#80868c" text-anchor="end">25</text>
<text x="1966" y="301.1" font-size="12.3" fill="#80868c">1</text>
<text x="1966" y="375.8" font-size="12.3" fill="#80868c">0.75</text>
<text x="1966" y="450.3" font-size="12.3" fill="#80868c">0.5</text>
<text x="1966" y="524.8" font-size="12.3" fill="#80868c">0.25</text>
<text transform="translate(1051,445.1) rotate(-90)" font-size="13.2" fill="#80868c" text-anchor="middle" textLength="71.4" lengthAdjust="spacing">Percentage</text>
<text transform="translate(1999.5,445.5) rotate(90)" font-size="13.2" fill="#80868c" text-anchor="middle" textLength="40.6" lengthAdjust="spacing">Apdex</text>
<rect x="1327" y="661.8" width="19.5" height="14" fill="#e8141c"/>
<text x="1353.4" y="674.4" font-size="13.4" fill="#80868c" textLength="63.6" lengthAdjust="spacing">Frustrated</text>
<rect x="1441.5" y="661.8" width="19.5" height="14" fill="#f7e10b"/>
<text x="1468" y="674.4" font-size="13.4" fill="#80868c" textLength="58.6" lengthAdjust="spacing">Tolerated</text>
<rect x="1550.5" y="661.8" width="19" height="14" fill="#6ccfae"/>
<text x="1576" y="674.4" font-size="13.4" fill="#80868c" textLength="53.7" lengthAdjust="spacing">Satisfied</text>
<line x1="1654" y1="669.3" x2="1673.6" y2="669.3" stroke="#743872" stroke-width="2.4"/>
<text x="1680" y="674.4" font-size="13.4" fill="#80868c" textLength="40.6" lengthAdjust="spacing">Apdex</text>
</svg>
<div style="position:absolute;left:22px;top:698.6px;width:996px;height:2px;background:#d9dde2"></div>
<div style="position:absolute;left:517.5px;top:691.4px;width:4px;height:4px;border-radius:2px;background:#e3e5e8"></div>
<div style="position:absolute;left:801.8px;top:696px;width:203.2px;height:33px;box-sizing:border-box;background:#fff;border:1px solid #e2e4e7;border-top:none;border-radius:0 0 4px 4px;box-shadow:0 1px 2px rgba(0,0,0,0.13)"></div>
<svg style="position:absolute;left:800px;top:696px" width="210" height="34">
<circle cx="21.7" cy="13.1" r="4.6" fill="none" stroke="#666d75" stroke-width="1.7"/>
<line x1="24.9" y1="16.4" x2="28.6" y2="20" stroke="#666d75" stroke-width="2.3" stroke-linecap="round"/>
<path d="M53.1 8.5 V18.5 M49.8 15.2 L53.1 18.5 L56.4 15.2 M47.5 20.3 H58.7" fill="none" stroke="#d9dcdf" stroke-width="1.5"/>
<circle cx="83.3" cy="9.5" r="1.5" fill="#5d646b"/>
<path d="M80.6 12.5 H84.6 V19 H86.2 V20.5 H80.4 V19 H81.9 V14 H80.6 Z" fill="#5d646b"/>
<path d="M109.6 10.8 A5.7 5.7 0 1 0 113.9 8.4" fill="none" stroke="#666d75" stroke-width="1.7"/>
<path d="M107.2 13.6 L107.4 8.4 L112.3 10.2 Z" fill="#666d75"/>
</svg>
<div class="t" style="left:940.6px;top:703.6px;font-size:12px;color:#707880;font-weight:400;letter-spacing:0.7110937499999999px;">&lt;1m ago</div>
<svg style="position:absolute;left:188px;top:572px" width="32" height="38">
<g transform="translate(-188,-572)">
<path d="M199.5 593.5 L199.5 578.6 Q199.5 576.3 202 576.3 Q204.5 576.3 204.5 578.6 L204.5 584.6 Q205.2 583.3 206.6 583.3 Q208.5 583.3 208.5 585.3 Q209.2 584.6 210.6 584.6 Q212.5 584.6 212.5 586.6 Q213.1 586 214.1 586 Q215.6 586 215.6 588 L215.6 596.5 Q215.6 605.2 207.3 605.2 Q201.2 605.2 197.3 599.5 L193.2 593.6 Q192.6 592 194.2 591.8 Q196.4 591.6 199.5 593.5 Z" fill="#fff" stroke="#2b2f33" stroke-width="1.1" stroke-linejoin="round"/>
<path d="M204.5 584.6 V590.5 M208.5 585.3 V590.5 M212.5 586.6 V590.5" stroke="#2b2f33" stroke-width="0.9"/>
</g></svg>
</div></div>
</body></html>
